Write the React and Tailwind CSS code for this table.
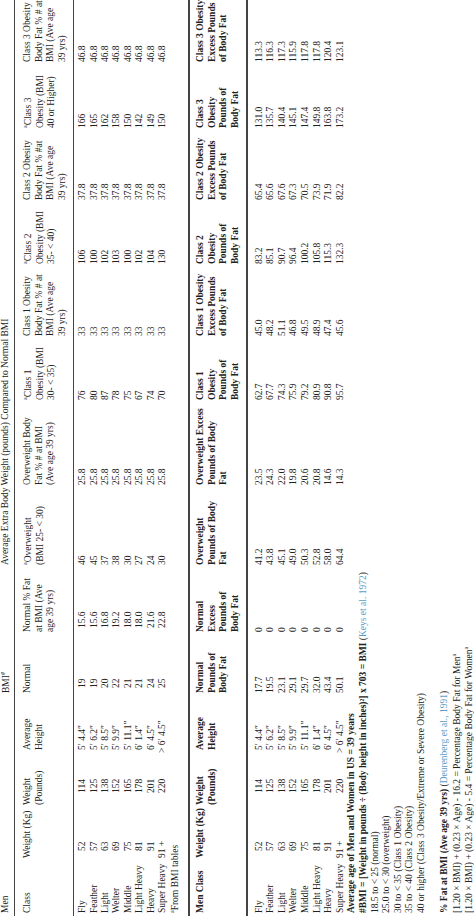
const GRID =
  "grid grid-cols-[58px_53px_55px_57px_61px_67px_80px_85px_64px_72px_64px_72px_66px_76px]";

function Mark() {
  return <span className="align-super text-[6px] leading-none">a</span>;
}

const head1 = [
  ["Class"],
  ["Weight (Kg)"],
  ["Weight", "(Pounds)"],
  ["Average", "Height"],
  ["Normal"],
  ["Normal % Fat", "at BMI (Ave", "age 39 yrs)"],
  [<><Mark />Overweight</>, "(BMI 25- < 30)"],
  ["Overweight Body", "Fat % # at BMI", "(Ave age 39 yrs)"],
  [<><Mark />Class 1</>, "Obesity (BMI", "30- < 35)"],
  ["Class 1 Obesity", "Body Fat % # at", "BMI (Ave age", "39 yrs)"],
  [<><Mark />Class 2</>, "Obesity (BMI", "35- < 40)"],
  ["Class 2 Obesity", "Body Fat % #at", "BMI (Ave age", "39 yrs)"],
  [<><Mark />Class 3</>, "Obesity (BMI", "40 or Higher)"],
  ["Class 3 Obesity", "Body Fat % # at", "BMI (Ave age", "39 yrs)"],
];

const head2 = [
  ["Men Class"],
  ["Weight (Kg)"],
  ["Weight", "(Pounds)"],
  ["Average", "Height"],
  ["Normal", "Pounds of", "Body Fat"],
  ["Normal", "Excess", "Pounds of", "Body Fat"],
  ["Overweight", "Pounds of Body", "Fat"],
  ["Overweight Excess", "Pounds of Body", "Fat"],
  ["Class 1", "Obesity", "Pounds of", "Body Fat"],
  ["Class 1 Obesity", "Excess Pounds", "of Body Fat"],
  ["Class 2", "Obesity", "Pounds of", "Body Fat"],
  ["Class 2 Obesity", "Excess Pounds", "of Body Fat"],
  ["Class 3", "Obesity", "Pounds of", "Body Fat"],
  ["Class 3 Obesity", "Excess Pounds", "of Body Fat"],
];

const base = [
  ["Fly", "52", "114", "5′ 4.4″"],
  ["Feather", "57", "125", "5′ 6.2″"],
  ["Light", "63", "138", "5′ 8.5″"],
  ["Welter", "69", "152", "5′ 9.9″"],
  ["Middle", "75", "165", "5′ 11.1″"],
  ["Light Heavy", "81", "178", "6′ 1.4″"],
  ["Heavy", "91", "201", "6′ 4.5″"],
  ["Super Heavy", "91 +", "220", "> 6′ 4.5″"],
];

const rest1 = [
  ["19", "15.6", "46", "25.8", "76", "33", "106", "37.8", "166", "46.8"],
  ["19", "15.6", "45", "25.8", "80", "33", "100", "37.8", "165", "46.8"],
  ["20", "16.8", "37", "25.8", "87", "33", "102", "37.8", "162", "46.8"],
  ["22", "19.2", "38", "25.8", "78", "33", "103", "37.8", "158", "46.8"],
  ["21", "18.0", "30", "25.8", "75", "33", "100", "37.8", "150", "46.8"],
  ["21", "18.0", "27", "25.8", "67", "33", "102", "37.8", "142", "46.8"],
  ["24", "21.6", "24", "25.8", "74", "33", "104", "37.8", "149", "46.8"],
  ["25", "22.8", "30", "25.8", "70", "33", "130", "37.8", "150", "46.8"],
];

const rest2 = [
  ["17.7", "0", "41.2", "23.5", "62.7", "45.0", "83.2", "65.4", "131.0", "113.3"],
  ["19.5", "0", "43.8", "24.3", "67.7", "48.2", "85.1", "65.6", "135.7", "116.3"],
  ["23.1", "0", "45.1", "22.0", "74.3", "51.1", "90.7", "67.6", "140.4", "117.3"],
  ["29.1", "0", "49.0", "19.8", "75.9", "46.8", "96.4", "67.3", "145.1", "115.9"],
  ["29.7", "0", "50.3", "20.6", "79.2", "49.5", "100.2", "70.5", "147.4", "117.8"],
  ["32.0", "0", "52.8", "20.8", "80.9", "48.9", "105.8", "73.9", "149.8", "117.8"],
  ["43.4", "0", "58.0", "14.6", "90.8", "47.4", "115.3", "71.9", "163.8", "120.4"],
  ["50.1", "0", "64.4", "14.3", "95.7", "45.6", "132.3", "82.2", "173.2", "123.1"],
];

// data offsets inside each column, per table
const pads1 = ["pl-[3px]", "pl-[7px]", "pl-[12px]", "", "pl-[5px]", "pl-[4px]"];
const pads2 = ["pl-[3px]", "pl-[7px]", "pl-[12px]", "", "", ""];

function Head({ cols, bold }) {
  return (
    <div className={`${GRID} leading-[11.5px] ${bold ? "font-bold" : ""}`}>
      {cols.map((lines, i) => (
        <div key={i} className={`whitespace-nowrap ${i === 0 ? "pl-[3px]" : ""}`}>
          {lines.map((l, j) => (
            <div key={j}>{l}</div>
          ))}
        </div>
      ))}
    </div>
  );
}

function Row({ cells, lh, pads }) {
  return (
    <div className={`${GRID} ${lh}`}>
      {cells.map((c, i) => {
        let pad = pads[i] || "";
        if (c === "91 +") pad = "";
        if (c === "> 6′ 4.5″") pad = "-ml-[3px]";
        return (
          <div key={i} className={`whitespace-nowrap ${pad}`}>
            {c}
          </div>
        );
      })}
    </div>
  );
}

const Rule = () => <div className="h-[1.5px] bg-[#444]" />;

export default function App() {
  return (
    <div className="w-[474px] h-[916px] overflow-hidden bg-white">
      <div className="w-[930px] h-[474px] origin-top-left translate-y-[916px] -rotate-90 font-['Liberation_Serif','Times_New_Roman',serif] text-[9.5px] text-[#222]">
        {/* title row */}
        <div className={`${GRID} h-[13.5px] leading-[11.5px]`}>
          <div className="pl-[3px] col-start-1">Men</div>
          <div className="col-start-5">
            BMI<span className="align-super text-[6px] leading-none">#</span>
          </div>
          <div className="col-start-7 col-span-8 whitespace-nowrap">
            Average Extra Body Weight (pounds) Compared to Normal BMI
          </div>
        </div>
        <Rule />

        <div className="pt-[7.25px] pb-[4.5px]">
          <Head cols={head1} />
        </div>
        <Rule />

        <div className="pt-[3px] pb-[7px]">
          {base.map((b, i) => (
            <Row key={i} cells={[...b, ...rest1[i]]} lh="leading-[11.4px]" pads={pads1} />
          ))}
          <div className="pl-[3px] leading-[11.4px] whitespace-nowrap">
            <Mark />From BMI tables
          </div>
        </div>
        <Rule />

        <div className="pt-[5.75px] pb-[4.75px]">
          <Head cols={head2} bold />
        </div>
        <Rule />

        <div className="pt-[6px] leading-[11.6px]">
          {base.map((b, i) => (
            <Row key={i} cells={[...b, ...rest2[i]]} lh="leading-[11.6px]" pads={pads2} />
          ))}
          <div className="pl-[3px] whitespace-nowrap">
            <div className="font-bold">Average age of Men and Women in US = 39 years</div>
            <div>
              <span className="font-bold">
                #BMI = [Weight in pounds ÷ (Body height in inches)²] x 703 = BMI
              </span>{" "}
              (<span className="text-[#5b9cc6]">Keys et al. 1972</span>)
            </div>
            <div>18.5 to &lt; 25 (normal)</div>
            <div>25.0 to &lt; 30 (overweight)</div>
            <div>30 to &lt; 35 (Class 1 Obesity)</div>
            <div>35 to &lt; 40 (Class 2 Obesity)</div>
            <div>40 or higher (Class 3 Obesity/Extreme or Severe Obesity)</div>
            <div className="h-[11.6px]" />
            <div>
              <span className="font-bold">% Fat at BMI (Ave age 39 yrs)</span> (
              <span className="text-[#5b9cc6]">Deurenberg et al., 1991</span>)
            </div>
            <div>
              [1.20 × BMI) + (0.23 × Age) - 16.2 = Percentage Body Fat for Men<Mark />
            </div>
            <div>
              [1.20 × BMI) + (0.23 × Age) - 5.4 = Percentage Body Fat for Women<Mark />
            </div>
          </div>
        </div>
      </div>
    </div>
  );
}
